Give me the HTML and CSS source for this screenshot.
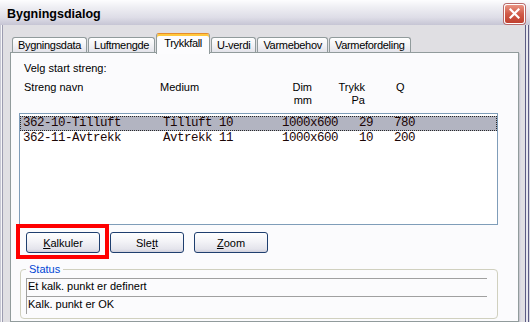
FILE: index.html
```html
<!DOCTYPE html>
<html lang="no">
<head>
    <meta charset="UTF-8">
    <title>Bygningsdialog</title>
    <link rel="stylesheet" href="styles.css">
</head>
<body>
    <div class="window">
        <div class="titlebar">
            <span class="title">Bygningsdialog</span>
            <span class="close">
                <svg width="11" height="11" viewBox="0 0 11 11"><path d="M1.5 1.5 L9.5 9.5 M9.5 1.5 L1.5 9.5" stroke="#fff" stroke-width="2.2" stroke-linecap="square"/></svg>
            </span>
        </div>
        <div class="client">
            <div class="tabs">
                <div class="tab">Bygningsdata</div>
                <div class="tab">Luftmengde</div>
                <div class="tab active">Trykkfall</div>
                <div class="tab">U-verdi</div>
                <div class="tab">Varmebehov</div>
                <div class="tab">Varmefordeling</div>
            </div>
            <div class="panel">
                <div class="prompt">Velg start streng:</div>
                <div class="head">
                    <span>Streng navn</span>
                    <span>Medium</span>
                    <span class="num">Dim<br>mm</span>
                    <span class="num">Trykk<br>Pa</span>
                    <span class="q">Q</span>
                </div>
                <div class="list">
                    <div class="row sel">
                        <span>362-10-Tilluft</span><span>Tilluft 10</span><span>1000x600</span><span>29</span><span>780</span>
                    </div>
                    <div class="row">
                        <span>362-11-Avtrekk</span><span>Avtrekk 11</span><span>1000x600</span><span>10</span><span>200</span>
                    </div>
                </div>
                <div class="buttons">
                    <div class="mark"><button class="btn"><u>K</u>alkuler</button></div>
                    <button class="btn">Sle<u>t</u>t</button>
                    <button class="btn"><u>Z</u>oom</button>
                </div>
                <fieldset class="status">
                    <legend>Status</legend>
                    <div class="field">Et kalk. punkt er definert</div>
                    <div class="field">Kalk. punkt er OK</div>
                </fieldset>
            </div>
        </div>
    </div>
</body>
</html>
```

FILE: styles.css
```css
body {
    margin: 0;
    font-family: "Liberation Sans", Arial, sans-serif;
    font-size: 11px;
    color: #000;
}
.window {
    width: 530px;
    height: 322px;
    overflow: hidden;
    display: flex;
    flex-direction: column;
    background: #e0dfe3;
    box-shadow: inset 1px 0 0 #c8c8d4, inset 2px 0 0 #f6f6f8, inset 3px 0 0 #9c9cb0,
        inset -1px 0 0 #d6d6e0, inset -2px 0 0 #5c5c84, inset -4px 0 0 #e8e8ef, inset -5px 0 0 #5c5c84;
}
.titlebar {
    height: 25px;
    flex-shrink: 0;
    display: flex;
    align-items: center;
    justify-content: space-between;
    padding: 2px 5px 0 7px;
    box-sizing: border-box;
    background: linear-gradient(#fdfdfe, #eeeef3 30%, #dedde7 70%, #c6c5d4);
}
.title {
    font-weight: bold;
    font-size: 12.5px;
}
.close {
    width: 21px;
    height: 20px;
    box-sizing: border-box;
    border: 1px solid #fff;
    border-radius: 3px;
    background: linear-gradient(#e99483, #d05a48 50%, #c0402f);
    box-shadow: 0 0 0 1px #b86a6a;
    display: flex;
    align-items: center;
    justify-content: center;
}
.client {
    flex: 1;
    display: flex;
    flex-direction: column;
    padding: 8px 11px 0 10px;
}
.tabs {
    display: flex;
    padding-left: 2px;
    margin-bottom: -1px;
    height: 20px;
}
.tab {
    align-self: flex-start;
    margin-top: 4px;
    margin-right: 1px;
    height: 15px;
    box-sizing: border-box;
    padding: 0 5px;
    line-height: 14px;
    letter-spacing: -0.3px;
    border: 1px solid #919b9c;
    border-bottom: 0;
    border-radius: 3px 3px 0 0;
    background: linear-gradient(#ffffff, #f3f3f6 50%, #e3e3ea);
}
.tab.active {
    position: relative;
    z-index: 2;
    margin-top: 0;
    height: 21px;
    padding: 0 7px;
    line-height: 18px;
    border-top: 1px solid #e68b2c;
    box-shadow: inset 0 2px 0 #ffc83c;
    background: #fcfcfe;
}
.panel {
    position: relative;
    z-index: 1;
    flex: 1;
    border: 1px solid #919b9c;
    background: #fbfbfd;
    box-shadow: 1px 1px 0 #c8c8d0, 2px 2px 0 #d8d8e0;
    padding-top: 9px;
}
.prompt {
    margin-left: 13px;
    line-height: 13px;
}
.head {
    display: grid;
    grid-template-columns: 136px 118px 34px 53px auto;
    margin: 6px 0 0 13px;
    line-height: 13px;
}
.head .num {
    text-align: right;
}
.head .q {
    padding-left: 31px;
}
.list {
    margin: 6px 20px 0 8px;
    height: 112px;
    box-sizing: border-box;
    border: 1px solid #7f9db9;
    background: #fff;
    padding-top: 2px;
    font-family: "Liberation Mono", "Courier New", monospace;
    font-size: 12.5px;
    letter-spacing: -0.5px;
}
.row {
    display: grid;
    grid-template-columns: 140px 119px 77px 35px auto;
    height: 15px;
    line-height: 15px;
    padding-left: 3px;
    color: #1c0606;
}
.row.sel {
    background: #b2b4c1;
    outline: 1px dotted #2a2a2a;
    outline-offset: -1px;
}
.buttons {
    display: flex;
    gap: 10px;
    margin: 7px 0 0 15px;
}
.mark {
    position: relative;
}
.mark::after {
    content: "";
    position: absolute;
    top: -8px;
    left: -10px;
    right: -9px;
    bottom: -6px;
    border: 4px solid #f00;
}
.btn {
    width: 74px;
    height: 21px;
    padding: 0;
    font-family: "Liberation Sans", Arial, sans-serif;
    font-size: 11px;
    color: #000;
    border: 1px solid #1f3f6f;
    border-radius: 3px;
    background: linear-gradient(#ffffff, #f3f3f7 45%, #e4e4ec 85%, #d0d0dc);
}
.status {
    margin: 10px 20px 0 9px;
    padding: 2px 10px 4px 5px;
    min-inline-size: 0;
    border: 1px solid #d0d0bf;
    border-radius: 4px;
}
.status legend {
    padding: 0 3px;
    line-height: 13px;
    color: #0046d5;
}
.field {
    height: 18px;
    box-sizing: border-box;
    border-top: 1px solid #a0a0a0;
    border-left: 1px solid #a0a0a0;
    padding-left: 1px;
    line-height: 15px;
}
```
